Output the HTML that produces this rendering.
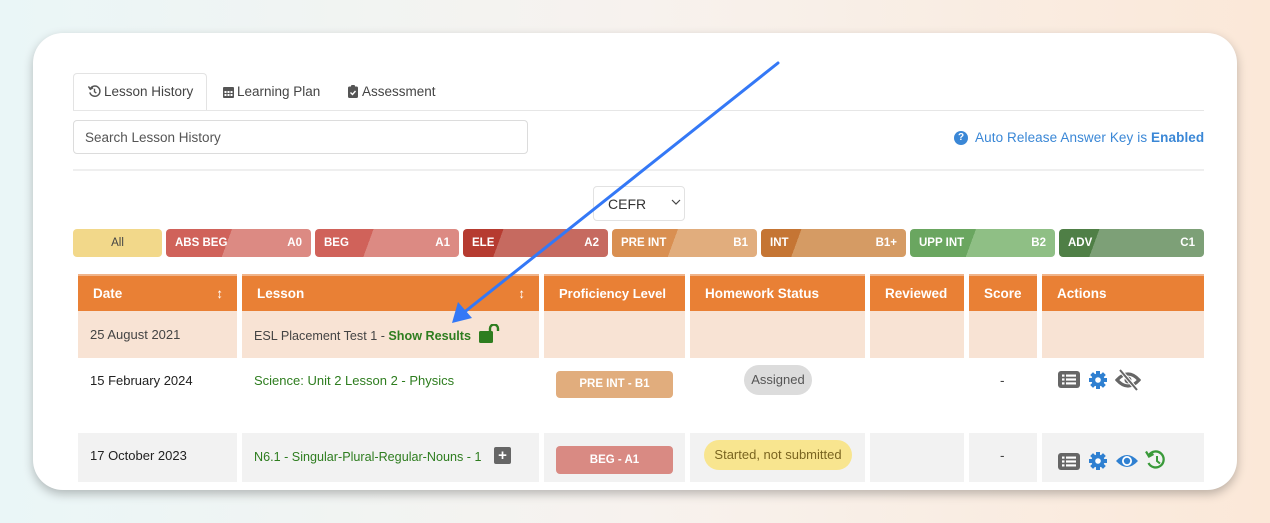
<!DOCTYPE html>
<html><head><meta charset="utf-8"><style>
*{box-sizing:border-box;margin:0;padding:0}
body{width:1270px;height:523px;overflow:hidden;position:relative;font-family:"Liberation Sans",sans-serif;background:linear-gradient(90deg,#eaf6f7 0%,#f7f2ee 50%,#fbe8d8 100%)}
.a{position:absolute}
.card{left:33px;top:33px;width:1204px;height:457px;background:#fff;border-radius:30px;box-shadow:0 4px 10px rgba(0,0,0,.25)}
.t{font-size:13.5px;color:#444;white-space:nowrap}
.lv{height:28px;top:229px;border-radius:4px;overflow:hidden;color:#fff;font-size:11.5px;font-weight:bold}
.lv span{position:absolute;top:8px}
.th{top:274px;height:37px;background:#e98035;color:#fff;font-weight:bold;font-size:13.5px;padding:10px 15px;border-top:2px solid #f0b48a;white-space:nowrap}
</style></head><body>
<div class="a card"></div>
<div class="a" style="left:73px;top:73px;width:134px;height:38px;border:1px solid #e3e3e3;border-bottom:none;border-radius:4px 4px 0 0;background:#fff"></div>
<div class="a" style="left:73px;top:110px;width:1131px;height:1px;background:#e6e6e6"></div>
<svg class="a" style="left:88px;top:85px" width="13" height="13" viewBox="0 0 14 14"><path d="M2.5 4A5.5 5.5 0 1 1 2 8" fill="none" stroke="#555" stroke-width="1.6"/><path d="M0.5 1.5L2.5 4.6L5.5 3" fill="none" stroke="#555" stroke-width="1.5"/><path d="M7 4v3.3l2 1.4" fill="none" stroke="#555" stroke-width="1.5"/></svg>
<div class="a t" style="left:104px;top:84px">Lesson History</div>
<svg class="a" style="left:223px;top:86px" width="11" height="12" viewBox="0 0 11 12"><rect x="0" y="1" width="11" height="11" rx="1" fill="#555"/><g fill="#fff"><rect x="1.5" y="5" width="2" height="2"/><rect x="4.5" y="5" width="2" height="2"/><rect x="7.5" y="5" width="2" height="2"/><rect x="1.5" y="8" width="2" height="2"/><rect x="4.5" y="8" width="2" height="2"/><rect x="7.5" y="8" width="2" height="2"/></g></svg>
<div class="a t" style="left:237px;top:84px">Learning Plan</div>
<svg class="a" style="left:348px;top:85px" width="10" height="13" viewBox="0 0 10 13"><rect x="0" y="1.5" width="10" height="11.5" rx="1.5" fill="#555"/><rect x="3" y="0" width="4" height="3" rx="1" fill="#555"/><path d="M2.5 7.5l2 2 3-3.5" stroke="#fff" stroke-width="1.4" fill="none"/></svg>
<div class="a t" style="left:362px;top:84px">Assessment</div>
<div class="a" style="left:73px;top:120px;width:455px;height:34px;border:1px solid #dcdcdc;border-radius:4px"></div>
<div class="a t" style="left:85px;top:130px;color:#555">Search Lesson History</div>
<div class="a" style="left:954px;top:131px;width:14px;height:14px;border-radius:50%;background:#3a87d6;color:#fff;font-size:10px;font-weight:bold;text-align:center;line-height:14px">?</div>
<div class="a t" style="left:975px;top:130px;color:#3a87d6;font-size:13.5px;letter-spacing:0.1px">Auto Release Answer Key is <b>Enabled</b></div>
<div class="a" style="left:73px;top:169px;width:1131px;height:2px;background:#efefef"></div>
<div class="a" style="left:593px;top:186px;width:92px;height:35px;border:1px solid #e2e2e2;border-radius:4px"></div>
<div class="a t" style="left:608px;top:196px;color:#333;font-size:14px">CEFR</div>
<svg class="a" style="left:671px;top:199px" width="10" height="7"><path d="M1 1l4 4 4-4" stroke="#444" fill="none" stroke-width="1.2"/></svg>
<div class="a lv" style="left:73px;width:89px;background:#f2d88a;color:#444;font-weight:normal"><span style="left:0;width:89px;text-align:center">All</span></div>
<div class="a lv" style="left:166px;width:145px;background:linear-gradient(110deg,#d0625a 0 62px,#dc8a83 62px)"><span style="left:9px">ABS BEG</span><span style="right:9px">A0</span></div>
<div class="a lv" style="left:315px;width:144px;background:linear-gradient(110deg,#d0625a 0 55px,#dc8a83 55px)"><span style="left:9px">BEG</span><span style="right:9px">A1</span></div>
<div class="a lv" style="left:463px;width:145px;background:linear-gradient(110deg,#b63b30 0 38px,#c66a60 38px)"><span style="left:9px">ELE</span><span style="right:9px">A2</span></div>
<div class="a lv" style="left:612px;width:145px;background:linear-gradient(110deg,#d98f51 0 62px,#e1ad7d 62px)"><span style="left:9px">PRE INT</span><span style="right:9px">B1</span></div>
<div class="a lv" style="left:761px;width:145px;background:linear-gradient(110deg,#c57534 0 38px,#d59b64 38px)"><span style="left:9px">INT</span><span style="right:9px">B1+</span></div>
<div class="a lv" style="left:910px;width:145px;background:linear-gradient(110deg,#6aa660 0 62px,#8fbf85 62px)"><span style="left:9px">UPP INT</span><span style="right:9px">B2</span></div>
<div class="a lv" style="left:1059px;width:145px;background:linear-gradient(110deg,#4f7f46 0 38px,#7da077 38px)"><span style="left:9px">ADV</span><span style="right:9px">C1</span></div>
<div class="a th" style="left:78px;width:159px">Date<span style="position:absolute;right:14px;font-weight:normal">↕</span></div>
<div class="a th" style="left:242px;width:297px">Lesson<span style="position:absolute;right:14px;font-weight:normal">↕</span></div>
<div class="a th" style="left:544px;width:141px;font-size:13px">Proficiency Level</div>
<div class="a th" style="left:690px;width:175px">Homework Status</div>
<div class="a th" style="left:870px;width:94px">Reviewed</div>
<div class="a th" style="left:969px;width:68px">Score</div>
<div class="a th" style="left:1042px;width:162px">Actions</div>
<div class="a" style="left:78px;top:311px;width:159px;height:47px;background:#f8e3d4"></div>
<div class="a" style="left:242px;top:311px;width:297px;height:47px;background:#f8e3d4"></div>
<div class="a" style="left:544px;top:311px;width:141px;height:47px;background:#f8e3d4"></div>
<div class="a" style="left:690px;top:311px;width:175px;height:47px;background:#f8e3d4"></div>
<div class="a" style="left:870px;top:311px;width:94px;height:47px;background:#f8e3d4"></div>
<div class="a" style="left:969px;top:311px;width:68px;height:47px;background:#f8e3d4"></div>
<div class="a" style="left:1042px;top:311px;width:162px;height:47px;background:#f8e3d4"></div>
<div class="a t" style="left:90px;top:327px;font-size:13px">25 August 2021</div>
<div class="a t" style="left:254px;top:329px;font-size:12.6px">ESL Placement Test 1 - <b style="color:#2e7d1f">Show Results</b></div>
<svg class="a" style="left:479px;top:324px" width="22" height="19" viewBox="0 0 22 19"><rect x="0" y="7" width="14" height="12" rx="1.5" fill="#2e7d1f"/><path d="M11 8V4.5a4 4 0 0 1 8 0V7" stroke="#2e7d1f" stroke-width="2.4" fill="none"/></svg>
<div class="a t" style="left:90px;top:373px;color:#222;font-size:13px">15 February 2024</div>
<div class="a t" style="left:254px;top:373px;color:#2e7d1f;font-size:13px">Science: Unit 2 Lesson 2 - Physics</div>
<div class="a" style="left:556px;top:371px;width:117px;height:27px;background:#e1ad7d;border-radius:4px;color:#fff;font-size:11.5px;font-weight:bold;text-align:center;line-height:27px">PRE INT - B1</div>
<div class="a" style="left:744px;top:365px;width:68px;height:30px;background:#dcdcdc;border-radius:15px;color:#555;font-size:13px;text-align:center;line-height:30px">Assigned</div>
<div class="a t" style="left:1000px;top:373px">-</div>
<div class="a" style="left:78px;top:433px;width:159px;height:49px;background:#f2f2f2"></div>
<div class="a" style="left:242px;top:433px;width:297px;height:49px;background:#f2f2f2"></div>
<div class="a" style="left:544px;top:433px;width:141px;height:49px;background:#f2f2f2"></div>
<div class="a" style="left:690px;top:433px;width:175px;height:49px;background:#f2f2f2"></div>
<div class="a" style="left:870px;top:433px;width:94px;height:49px;background:#f2f2f2"></div>
<div class="a" style="left:969px;top:433px;width:68px;height:49px;background:#f2f2f2"></div>
<div class="a" style="left:1042px;top:433px;width:162px;height:49px;background:#f2f2f2"></div>
<div class="a t" style="left:90px;top:448px;color:#222;font-size:13px">17 October 2023</div>
<div class="a t" style="left:254px;top:450px;color:#2e7d1f;font-size:12.6px">N6.1 - Singular-Plural-Regular-Nouns - 1</div>
<div class="a" style="left:494px;top:447px;width:17px;height:17px;background:#666;border-radius:2px;color:#fff;font-weight:bold;font-size:15px;text-align:center;line-height:17px">+</div>
<div class="a" style="left:556px;top:446px;width:117px;height:28px;background:#d98a83;border-radius:4px;color:#fff;font-size:11.5px;font-weight:bold;text-align:center;line-height:28px">BEG - A1</div>
<div class="a" style="left:704px;top:440px;width:148px;height:30px;background:#f8e58f;border-radius:15px;color:#7a6520;font-size:13px;text-align:center;line-height:30px">Started, not submitted</div>
<div class="a t" style="left:1000px;top:448px">-</div>
<svg width="0" height="0" style="position:absolute"><defs>
<g id="list"><rect x="0" y="0" width="22" height="17" rx="3" fill="#666"/><g fill="#fff"><rect x="4" y="3.5" width="2.5" height="2.2"/><rect x="8" y="3.5" width="10" height="2.2"/><rect x="4" y="7.4" width="2.5" height="2.2"/><rect x="8" y="7.4" width="10" height="2.2"/><rect x="4" y="11.3" width="2.5" height="2.2"/><rect x="8" y="11.3" width="10" height="2.2"/></g></g>
<g id="gear"><g fill="#2f80d1"><circle cx="10" cy="10" r="6.5"/><g stroke="#2f80d1" stroke-width="4"><path d="M10 1v18M1 10h18M3.6 3.6l12.8 12.8M16.4 3.6L3.6 16.4"/></g></g><circle cx="10" cy="10" r="2.8" fill="#fff"/></g>
</defs></svg>
<svg class="a" style="left:1058px;top:371px" width="22" height="17"><use href="#list"/></svg>
<svg class="a" style="left:1088px;top:370px" width="20" height="20"><use href="#gear"/></svg>
<svg class="a" style="left:1115px;top:368px" width="26" height="24" viewBox="0 0 26 24"><path d="M2 12Q13 0 24 12Q13 24 2 12Z" fill="none" stroke="#666" stroke-width="3.2"/><circle cx="13" cy="12" r="3.5" fill="#666"/><path d="M5 2L22 22" stroke="#fff" stroke-width="4"/><path d="M5 2L22 22" stroke="#666" stroke-width="2"/></svg>
<svg class="a" style="left:1058px;top:453px" width="22" height="17"><use href="#list"/></svg>
<svg class="a" style="left:1088px;top:451px" width="20" height="20"><use href="#gear"/></svg>
<svg class="a" style="left:1115px;top:451px" width="24" height="20" viewBox="0 0 24 20"><path d="M1 10Q12 -2 23 10Q12 22 1 10Z" fill="#2f80d1"/><circle cx="12" cy="10" r="5" fill="#fff"/><circle cx="12" cy="10" r="3.2" fill="#2f80d1"/></svg>
<svg class="a" style="left:1145px;top:450px" width="22" height="21" viewBox="0 0 22 21"><path d="M4 5A8 8 0 1 1 3.5 13" fill="none" stroke="#3a9a3a" stroke-width="2.3"/><path d="M1 1.5L4 6.5L8.5 4" fill="none" stroke="#3a9a3a" stroke-width="2.2"/><path d="M12 6v5l3 2.5" fill="none" stroke="#3a9a3a" stroke-width="2"/></svg>
<svg class="a" style="left:0;top:0" width="1270" height="523"><line x1="778" y1="63" x2="462" y2="314" stroke="#3478f6" stroke-width="3" stroke-linecap="round"/><path d="M452 323L458 302L472 318Z" fill="#3478f6"/></svg>
</body></html>
